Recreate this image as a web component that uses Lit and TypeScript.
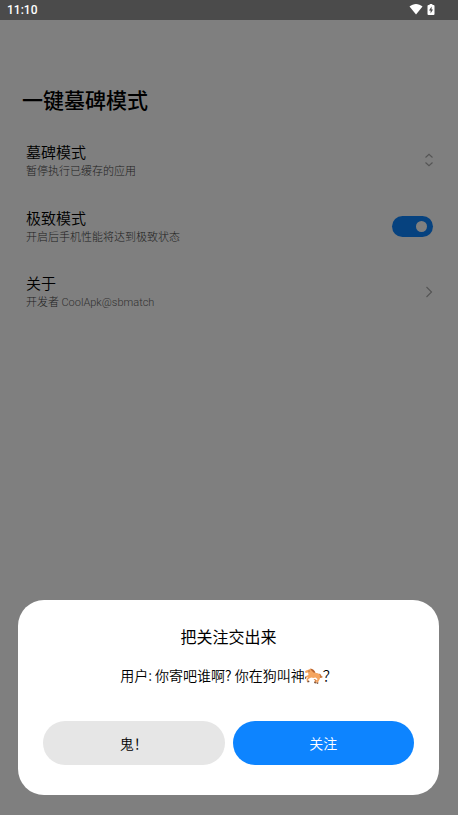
import { LitElement, html, css } from "lit";
import { customElement, state } from "lit/decorators.js";

const horse = html`<svg class="horse" viewBox="0 0 36 32" role="img" aria-label="马">
  <path d="M27 12c3-2 5 1 6 4l3 2-4 2c-4 0-6-3-7-6z" fill="#c9763c" />
  <path d="M8 3l3-2 2 3c3 1 5 4 8 6 4 0 8 1 9 5 0 3-1 4 0 6l-3 6-2 3-3-1 3-7-4-3c-3 1-6 1-8 0l-3 1-4 3 1 4-3 1-1-5 3-5-4 1-2 3-3-1 3-4 7-3-1-5-4 1-3-2 3-3z" fill="#f5a55f" />
  <path d="M11 1l3 1c3 1 6 4 7 8l-4-1-5-5z" fill="#b9632d" />
  <path d="M0 18l3 1-1 3-2-1zM5 26l3-1 1 3-4 1zM19 27l4 1-1 3-4-1zM24 29l3 0-1 3-3-1z" fill="#74503d" />
  <path d="M20 22l4 3-3 4-2-1 1-3-3-3z" fill="#d98545" />
  <circle cx="8" cy="6" r="1" fill="#40332c" />
</svg>`;

@customElement("app-root")
export class AppRoot extends LitElement {
  @state() private extreme = true;

  static styles = css`
    :host {
      display: flex;
      flex-direction: column;
      min-height: 100vh;
      background: #fff;
      color: #000;
      font-family: "Noto Sans CJK SC", sans-serif;
      font-weight: 350;
    }
    * { box-sizing: border-box; }
    button { font: inherit; color: inherit; border: 0; cursor: pointer; }
    .status {
      position: relative;
      z-index: 2;
      display: flex;
      align-items: center;
      justify-content: space-between;
      height: 20px;
      padding: 0 23px 0 7px;
      background: #4b4b4b;
      color: #fff;
      font: 500 12px/20px Roboto, sans-serif;
    }
    .icons { display: flex; align-items: center; gap: 4px; }
    .icons svg { display: block; }
    main { padding: 63px 22px 0; }
    h1 { margin: 0 0 12px; font-size: 21px; line-height: 32px; font-weight: 500; }
    .row {
      display: flex;
      align-items: center;
      justify-content: space-between;
      width: 100%;
      height: 66px;
      padding: 0 3px 0 4px;
      background: none;
      text-align: left;
    }
    .text { display: flex; flex-direction: column; }
    .name { font-size: 15px; line-height: 20px; }
    .hint {
      font-size: 11px;
      line-height: 17px;
      font-weight: 300;
      color: #444;
    }
    .latin { font-family: Roboto, sans-serif; color: #666; }
    .mark { display: block; fill: none; stroke: #aaa; stroke-width: 1.2; }
    .switch {
      appearance: none;
      display: flex;
      align-items: center;
      width: 41px;
      height: 21px;
      margin: 0;
      padding: 0 6px;
      border-radius: 11px;
      background: #bbb;
    }
    .switch:checked { justify-content: flex-end; background: #0d84ff; }
    .switch::before {
      content: "";
      width: 11px;
      height: 11px;
      border-radius: 50%;
      background: #fff;
    }
    .scrim {
      position: fixed;
      inset: 0;
      z-index: 1;
      display: flex;
      align-items: flex-end;
      padding: 20px 19px 20px 18px;
      background: rgba(0, 0, 0, 0.5);
    }
    .sheet {
      flex: 1;
      padding: 24px 25px 30px;
      border-radius: 26px;
      background: #fff;
      text-align: center;
    }
    h2 { margin: 0; font-size: 16px; line-height: 24px; font-weight: 400; }
    .message { margin: 16px 0 35px; font-size: 14px; line-height: 22px; }
    .horse { width: 18px; height: 16px; vertical-align: -3px; }
    .actions { display: grid; grid-template-columns: 1fr 1fr; gap: 8px; }
    .action { height: 44px; border-radius: 22px; background: #e6e6e6; font-size: 14px; }
    .primary { background: #0d84ff; color: #fff; }
  `;

  render() {
    return html`
      <header class="status">
        <time>11:10</time>
        <div class="icons">
          <svg width="14" height="12" viewBox="0 0 14 12" aria-hidden="true">
            <path d="M0.5 2.6C4.4 -0.8 9.6 -0.8 13.5 2.6L7 10.4z" fill="#fff" />
          </svg>
          <svg width="8" height="12" viewBox="0 0 8 12" aria-hidden="true">
            <path d="M2.6 0h2.8v1H6.5q1 0 1 1v8q0 1-1 1h-5q-1 0-1-1v-8q0-1 1-1h1.1z" fill="#fff" />
            <path d="M4.6 2.5L2 6.5h1.6v3L6 5.5H4.6z" fill="#4b4b4b" />
          </svg>
        </div>
      </header>
      <main>
        <h1>一键墓碑模式</h1>
        <button class="row" aria-haspopup="listbox">
          <span class="text">
            <span class="name">墓碑模式</span>
            <span class="hint">暂停执行已缓存的应用</span>
          </span>
          <svg class="mark" width="8" height="14" viewBox="0 0 8 14" aria-hidden="true">
            <path d="M0.5 4.5L4 1.3l3.5 3.2M0.5 9.5L4 12.7l3.5-3.2" />
          </svg>
        </button>
        <label class="row">
          <span class="text">
            <span class="name">极致模式</span>
            <span class="hint">开启后手机性能将达到极致状态</span>
          </span>
          <input
            class="switch"
            type="checkbox"
            role="switch"
            .checked=${this.extreme}
            @change=${(e: Event) => (this.extreme = (e.target as HTMLInputElement).checked)}
          />
        </label>
        <button class="row">
          <span class="text">
            <span class="name">关于</span>
            <span class="hint">开发者 <span class="latin">CoolApk@sbmatch</span></span>
          </span>
          <svg class="mark" width="8" height="12" viewBox="0 0 8 12" aria-hidden="true">
            <path d="M1.5 1L6.5 6l-5 5" />
          </svg>
        </button>
      </main>
      <div class="scrim">
        <section class="sheet" role="dialog" aria-modal="true" aria-labelledby="sheet-title">
          <h2 id="sheet-title">把关注交出来</h2>
          <p class="message">用户: 你寄吧谁啊? 你在狗叫神${horse}？</p>
          <div class="actions">
            <button class="action">鬼！</button>
            <button class="action primary">关注</button>
          </div>
        </section>
      </div>
    `;
  }
}
